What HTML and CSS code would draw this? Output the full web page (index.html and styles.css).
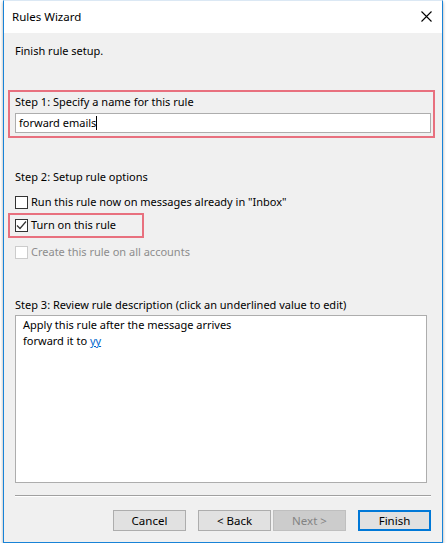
FILE: index.html
```html
<!DOCTYPE html>
<html>
<head>
    <title>Rules Wizard</title>
    <link rel="stylesheet" href="styles.css">
</head>
<body>
    <div class="window">
        <div class="titlebar">
            <span class="title">Rules Wizard</span>
            <svg class="close" width="11" height="11" viewBox="0 0 11 11">
                <path d="M0.5 0.5 L10.5 10.5 M10.5 0.5 L0.5 10.5" stroke="#000" stroke-width="1.1" fill="none"/>
            </svg>
        </div>

        <div class="content">
            <div class="intro">Finish rule setup.</div>

            <div class="highlight step-name">
                <div class="label">Step 1: Specify a name for this rule</div>
                <div class="textbox">forward emails<span class="caret"></span></div>
            </div>

            <div class="label step-options">Step 2: Setup rule options</div>
            <div class="option">
                <span class="check"></span>
                <span>Run this rule now on messages already in "Inbox"</span>
            </div>
            <div class="highlight option-box">
                <div class="option">
                    <span class="check">
                        <svg width="11" height="11" viewBox="0 0 11 11">
                            <path d="M1 5.5 L4 8.5 L10 1.5" stroke="#333" stroke-width="1.2" fill="none"/>
                        </svg>
                    </span>
                    <span>Turn on this rule</span>
                </div>
            </div>
            <div class="option disabled">
                <span class="check"></span>
                <span>Create this rule on all accounts</span>
            </div>

            <div class="label step-review">Step 3: Review rule description (click an underlined value to edit)</div>
            <div class="description">
                <div>Apply this rule after the message arrives</div>
                <div>forward it to <a href="#" class="value">yy</a></div>
            </div>

            <div class="separator"></div>

            <div class="buttons">
                <button class="btn">Cancel</button>
                <button class="btn back">&lt; Back</button>
                <button class="btn next" disabled>Next &gt;</button>
                <button class="btn finish">Finish</button>
            </div>
        </div>
    </div>
</body>
</html>
```

FILE: styles.css
```css
body {
    margin: 0;
    padding: 0;
    background-color: #fff;
    font-family: "Noto Sans", "Open Sans", sans-serif;
    font-size: 11px;
    color: #000;
}

.window {
    box-sizing: border-box;
    width: 440px;
    height: 543px;
    margin-left: 3px;
    background-color: #f0f0f0;
    border: 1px solid #1883d7;
    border-top-color: #dbe8f4;
    box-shadow: 0 2px 3px rgba(0, 0, 0, 0.35);
}

.titlebar {
    display: flex;
    align-items: center;
    justify-content: space-between;
    height: 32px;
    padding: 0 10px 0 8px;
    background-color: #fff;
}

.title {
    font-size: 11.5px;
    margin-top: -2px;
}

.close {
    margin-top: -2px;
}

.content {
    padding: 10px 11px 0 11px;
}

.intro,
.label,
.option {
    line-height: 16px;
}

/* red outline around the highlighted parts */
.highlight {
    border: 2px solid #e8707e;
    margin-left: -7px;
}

.step-name {
    margin-top: 31px;
    margin-right: -4px;
    padding: 2px 2px 3px 5px;
}

.textbox {
    box-sizing: border-box;
    height: 20px;
    margin-top: 3px;
    padding: 0 3px;
    line-height: 18px;
    background-color: #fff;
    border: 1px solid #adadad;
}

.caret {
    display: inline-block;
    width: 1px;
    height: 14px;
    background-color: #000;
    vertical-align: -3px;
}

.step-options {
    margin-top: 31px;
}

.option {
    display: flex;
    align-items: center;
    gap: 3px;
    margin-top: 9px;
}

.check {
    box-sizing: border-box;
    display: flex;
    align-items: center;
    justify-content: center;
    width: 13px;
    height: 13px;
    background-color: #fff;
    border: 1px solid #333;
}

.option-box {
    width: 122px;
    margin-top: 3px;
    padding: 2px 5px 3px;
}

.option-box .option {
    margin-top: 0;
}

.disabled {
    color: #8d8d8d;
    margin-top: 6px;
}

.disabled .check {
    border-color: #cccccc;
}

.step-review {
    margin-top: 37px;
}

.description {
    box-sizing: border-box;
    height: 168px;
    margin-top: 2px;
    margin-right: 4px;
    padding: 1px 7px;
    line-height: 16px;
    background-color: #fff;
    border: 1px solid #adadad;
}

.value {
    color: #0066cc;
}

.separator {
    margin-top: 12px;
    border-top: 1px solid #a0a0a0;
    border-bottom: 1px solid #fff;
}

.buttons {
    display: flex;
    justify-content: flex-end;
    margin-top: 13px;
}

.btn {
    box-sizing: border-box;
    width: 73px;
    height: 21px;
    margin-left: 12px;
    padding: 0;
    font-family: inherit;
    font-size: 11.5px;
    color: #000;
    background-color: #e1e1e1;
    border: 1px solid #adadad;
}

.next {
    margin-left: 2px;
    color: #838383;
    background-color: #cccccc;
    border-color: #bfbfbf;
}

.finish {
    border: 2px solid #0078d7;
}
```
